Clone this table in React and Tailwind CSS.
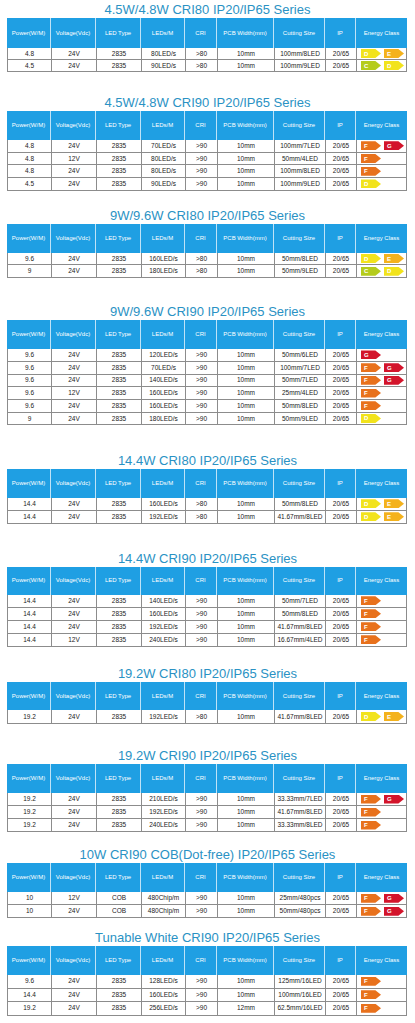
const heads = ["Power(W/M)", "Voltage(Vdc)", "LED Type", "LEDs/M", "CRI", "PCB Width(mm)", "Cutting Size", "IP", "Energy Class"];

const badgeColor = {
    C: "bg-[#b5cc1c]",
    D: "bg-[#f2e31c]",
    E: "bg-[#f4b21c]",
    F: "bg-[#e8711c]",
    G: "bg-[#d3142b]",
};

const sections = [
    {
        title: "4.5W/4.8W CRI80 IP20/IP65 Series", mt: "mt-[1px]", head: "h-[30px]", row: "h-[12px]",
        rows: [
            ["4.8", "24V", "2835", "80LED/s", ">80", "10mm", "100mm/8LED", "20/65", "DE"],
            ["4.5", "24V", "2835", "90LED/s", ">80", "10mm", "100mm/9LED", "20/65", "CD"],
        ],
    },
    {
        title: "4.5W/4.8W CRI90 IP20/IP65 Series", mt: "mt-[22px]", head: "h-[29px]", row: "h-[12.7px]",
        rows: [
            ["4.8", "24V", "2835", "70LED/s", ">90", "10mm", "100mm/7LED", "20/65", "FG"],
            ["4.8", "12V", "2835", "80LED/s", ">90", "10mm", "50mm/4LED", "20/65", "F"],
            ["4.8", "24V", "2835", "80LED/s", ">90", "10mm", "100mm/8LED", "20/65", "F"],
            ["4.5", "24V", "2835", "90LED/s", ">90", "10mm", "100mm/9LED", "20/65", "D"],
        ],
    },
    {
        title: "9W/9.6W CRI80 IP20/IP65 Series", mt: "mt-[16px]", head: "h-[29px]", row: "h-[12.7px]",
        rows: [
            ["9.6", "24V", "2835", "160LED/s", ">80", "10mm", "50mm/8LED", "20/65", "DE"],
            ["9", "24V", "2835", "180LED/s", ">80", "10mm", "50mm/9LED", "20/65", "CD"],
        ],
    },
    {
        title: "9W/9.6W CRI90 IP20/IP65 Series", mt: "mt-[25px]", head: "h-[29px]", row: "h-[12.7px]",
        rows: [
            ["9.6", "24V", "2835", "120LED/s", ">90", "10mm", "50mm/6LED", "20/65", "G"],
            ["9.6", "24V", "2835", "70LED/s", ">90", "10mm", "100mm/7LED", "20/65", "FG"],
            ["9.6", "24V", "2835", "140LED/s", ">90", "10mm", "50mm/7LED", "20/65", "FG"],
            ["9.6", "12V", "2835", "160LED/s", ">90", "10mm", "25mm/4LED", "20/65", "F"],
            ["9.6", "24V", "2835", "160LED/s", ">90", "10mm", "50mm/8LED", "20/65", "F"],
            ["9", "24V", "2835", "180LED/s", ">90", "10mm", "50mm/9LED", "20/65", "D"],
        ],
    },
    {
        title: "14.4W CRI80 IP20/IP65 Series", mt: "mt-[27px]", head: "h-[28.5px]", row: "h-[13px]",
        rows: [
            ["14.4", "24V", "2835", "160LED/s", ">80", "10mm", "50mm/8LED", "20/65", "DE"],
            ["14.4", "24V", "2835", "192LED/s", ">80", "10mm", "41.67mm/8LED", "20/65", "DE"],
        ],
    },
    {
        title: "14.4W CRI90 IP20/IP65 Series", mt: "mt-[26px]", head: "h-[28px]", row: "h-[13px]",
        rows: [
            ["14.4", "24V", "2835", "140LED/s", ">90", "10mm", "50mm/7LED", "20/65", "F"],
            ["14.4", "24V", "2835", "160LED/s", ">90", "10mm", "50mm/8LED", "20/65", "F"],
            ["14.4", "24V", "2835", "192LED/s", ">90", "10mm", "41.67mm/8LED", "20/65", "F"],
            ["14.4", "12V", "2835", "240LED/s", ">90", "10mm", "16.67mm/4LED", "20/65", "F"],
        ],
    },
    {
        title: "19.2W CRI80 IP20/IP65 Series", mt: "mt-[18px]", head: "h-[28.7px]", row: "h-[13.3px]",
        rows: [
            ["19.2", "24V", "2835", "192LED/s", ">80", "10mm", "41.67mm/8LED", "20/65", "DE"],
        ],
    },
    {
        title: "19.2W CRI90 IP20/IP65 Series", mt: "mt-[23px]", head: "h-[29.3px]", row: "h-[13px]",
        rows: [
            ["19.2", "24V", "2835", "210LED/s", ">90", "10mm", "33.33mm/7LED", "20/65", "FG"],
            ["19.2", "24V", "2835", "192LED/s", ">90", "10mm", "41.67mm/8LED", "20/65", "F"],
            ["19.2", "24V", "2835", "240LED/s", ">90", "10mm", "33.33mm/8LED", "20/65", "F"],
        ],
    },
    {
        title: "10W CRI90 COB(Dot-free) IP20/IP65 Series", mt: "mt-[14px]", head: "h-[29.3px]", row: "h-[13px]",
        rows: [
            ["10", "12V", "COB", "480Chip/m", ">90", "10mm", "25mm/480pcs", "20/65", "FG"],
            ["10", "24V", "COB", "480Chip/m", ">90", "10mm", "50mm/480pcs", "20/65", "FG"],
        ],
    },
    {
        title: "Tunable White CRI90 IP20/IP65 Series", mt: "mt-[11px]", head: "h-[28.7px]", row: "h-[13.5px]",
        rows: [
            ["9.6", "24V", "2835", "128LED/s", ">90", "10mm", "125mm/16LED", "20/65", "F"],
            ["14.4", "24V", "2835", "160LED/s", ">90", "10mm", "100mm/16LED", "20/65", "F"],
            ["19.2", "24V", "2835", "256LED/s", ">90", "12mm", "62.5mm/16LED", "20/65", "F"],
        ],
    },
];

const cols = "grid grid-cols-[44px_45px_45px_44px_32px_57px_51px_31px_51px]";

const Badge = ({ k }) => (
    <div className={`${badgeColor[k]} w-[20px] h-[9px] flex items-center pl-[3px] text-[6px] font-bold leading-none text-white [clip-path:polygon(0_0,72%_0,100%_50%,72%_100%,0_100%)]`}>
        {k}
    </div>
);

const Section = ({ s }) => (
    <div className={s.mt}>
        <h2 className="h-[17px] text-center text-[13px] leading-[17px] text-[#2a92c4]">{s.title}</h2>
        <div className="w-[400px] ml-[7px]">
            <div className={`${cols} ${s.head} bg-[#1f9fe3] text-white text-[6px]`}>
                {heads.map((h, i) => (
                    <div key={h} className={`flex items-center justify-center text-center ${i < 8 ? "border-r border-[#bfe3f7]" : ""}`}>{h}</div>
                ))}
            </div>
            {s.rows.map((r, ri) => (
                <div key={ri} className={`${cols} ${s.row} border-x border-b border-[#8c8c8c] text-[6.5px] text-[#222]`}>
                    {r.slice(0, 8).map((c, i) => (
                        <div key={i} className="flex items-center justify-center border-r border-[#8c8c8c]">{c}</div>
                    ))}
                    <div className="flex items-center gap-[3px] pl-[4px]">
                        {r[8].split("").map((k) => <Badge key={k} k={k} />)}
                    </div>
                </div>
            ))}
        </div>
    </div>
);

const App = () => {
    return (
        <div className="w-[415px] min-h-[1023px] bg-white font-['Liberation_Sans',Arial,sans-serif]">
            {sections.map((s) => <Section key={s.title} s={s} />)}
        </div>
    );
};

export default App;
